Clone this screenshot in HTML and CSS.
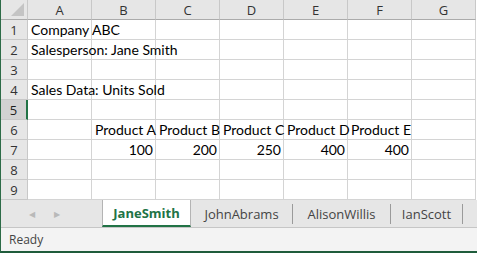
FILE: index.html
```html
<!DOCTYPE html>
<html lang="en">
<head>
    <meta charset="UTF-8">
    <title>Sales Workbook</title>
    <link rel="stylesheet" href="styles.css">
</head>
<body>
    <div class="app">
        <div class="sheet">
            <div class="corner"><span class="corner-mark"></span></div>
            <div class="col-head">A</div>
            <div class="col-head">B</div>
            <div class="col-head">C</div>
            <div class="col-head">D</div>
            <div class="col-head">E</div>
            <div class="col-head">F</div>
            <div class="col-head">G</div>

            <div class="row-head">1</div>
            <div class="cell"><span class="spill">Company ABC</span></div>
            <div class="cell"></div><div class="cell"></div><div class="cell"></div><div class="cell"></div><div class="cell"></div><div class="cell"></div>

            <div class="row-head">2</div>
            <div class="cell"><span class="spill">Salesperson: Jane Smith</span></div>
            <div class="cell"></div><div class="cell"></div><div class="cell"></div><div class="cell"></div><div class="cell"></div><div class="cell"></div>

            <div class="row-head">3</div>
            <div class="cell"></div><div class="cell"></div><div class="cell"></div><div class="cell"></div><div class="cell"></div><div class="cell"></div><div class="cell"></div>

            <div class="row-head">4</div>
            <div class="cell"><span class="spill">Sales Data: Units Sold</span></div>
            <div class="cell"></div><div class="cell"></div><div class="cell"></div><div class="cell"></div><div class="cell"></div><div class="cell"></div>

            <div class="row-head selected">5</div>
            <div class="cell"></div><div class="cell"></div><div class="cell"></div><div class="cell"></div><div class="cell"></div><div class="cell"></div><div class="cell"></div>

            <div class="row-head">6</div>
            <div class="cell"></div>
            <div class="cell">Product A</div>
            <div class="cell">Product B</div>
            <div class="cell">Product C</div>
            <div class="cell">Product D</div>
            <div class="cell">Product E</div>
            <div class="cell"></div>

            <div class="row-head">7</div>
            <div class="cell"></div>
            <div class="cell num">100</div>
            <div class="cell num">200</div>
            <div class="cell num">250</div>
            <div class="cell num">400</div>
            <div class="cell num">400</div>
            <div class="cell"></div>

            <div class="row-head">8</div>
            <div class="cell"></div><div class="cell"></div><div class="cell"></div><div class="cell"></div><div class="cell"></div><div class="cell"></div><div class="cell"></div>

            <div class="row-head">9</div>
            <div class="cell"></div><div class="cell"></div><div class="cell"></div><div class="cell"></div><div class="cell"></div><div class="cell"></div><div class="cell"></div>
        </div>

        <div class="tab-bar">
            <div class="tab-nav">
                <span class="nav-arrow">&#9664;</span>
                <span class="nav-arrow">&#9654;</span>
            </div>
            <div class="tab active">JaneSmith</div>
            <div class="tab">JohnAbrams</div>
            <div class="tab">AlisonWillis</div>
            <div class="tab">IanScott</div>
        </div>

        <div class="status-bar">Ready</div>
    </div>
</body>
</html>
```

FILE: styles.css
```css
* {
    margin: 0;
    padding: 0;
    box-sizing: border-box;
}

body {
    width: 477px;
    height: 253px;
    overflow: hidden;
    background: #ffffff;
    font-family: Lato, 'Liberation Sans', sans-serif;
}

.app {
    height: 253px;
    border-left: 1px solid #2d6b47;
    border-bottom: 2px solid #1f5c3b;
    display: flex;
    flex-direction: column;
}

/* grid of cells */
.sheet {
    display: grid;
    grid-template-columns: 27px repeat(7, 64px) 1fr;
    grid-template-rows: 20px repeat(9, 20px);
    font-size: 14px;
    color: #000;
}

.corner {
    background: #e6e6e6;
    border-right: 1px solid #c8c8c8;
    border-bottom: 1px solid #ababab;
    position: relative;
}

.corner-mark {
    position: absolute;
    right: 3px;
    bottom: 3px;
    width: 0;
    height: 0;
    border-left: 13px solid transparent;
    border-bottom: 13px solid #c4c4c4;
}

.col-head {
    background: #e6e6e6;
    border-right: 1px solid #c8c8c8;
    border-bottom: 1px solid #ababab;
    font-family: 'Open Sans', 'Noto Sans', sans-serif;
    font-size: 13px;
    color: #333;
    display: flex;
    align-items: center;
    justify-content: center;
}

.row-head {
    grid-column: 1;
    background: #e6e6e6;
    border-right: 1px solid #c8c8c8;
    border-bottom: 1px solid #c8c8c8;
    font-family: 'Open Sans', 'Noto Sans', sans-serif;
    font-size: 13px;
    color: #333;
    display: flex;
    align-items: center;
    justify-content: center;
}

.row-head.selected {
    background: #d2d2d2;
    border-right: 2px solid #217346;
    color: #1e1e1e;
}

.cell {
    border-right: 1px solid #d4d4d4;
    border-bottom: 1px solid #d4d4d4;
    padding: 0 2px 0 3px;
    display: flex;
    align-items: center;
    white-space: nowrap;
    position: relative;
}

.cell.num {
    justify-content: flex-end;
}

.spill {
    position: relative;
    z-index: 1;
}

/* sheet tabs */
.tab-bar {
    display: flex;
    align-items: stretch;
    height: 28px;
    background: #e6e6e6;
    border-bottom: 1px solid #c6c6c6;
    font-family: 'Open Sans', 'Noto Sans', sans-serif;
    font-size: 13px;
    color: #444;
}

.tab-nav {
    width: 101px;
    display: flex;
    align-items: center;
    gap: 19px;
    padding-left: 28px;
    color: #b9b9b9;
    font-size: 8px;
}

.tab {
    display: flex;
    align-items: center;
    justify-content: center;
    margin: 4px 0 3px;
    padding: 0 12px;
    border-right: 1px solid #9a9a9a;
}

.tab:nth-child(3) { width: 102px; }
.tab:nth-child(4) { width: 98px; }
.tab:nth-child(5) { width: 72px; }

.tab.active {
    width: 89px;
    margin: 0;
    background: #ffffff;
    color: #217346;
    font-weight: 700;
    border-left: 1px solid #b4b4b4;
    border-right: 1px solid #b4b4b4;
    border-bottom: 2px solid #217346;
    padding-top: 1px;
}

/* status bar */
.status-bar {
    flex: 1;
    background: #f3f3f3;
    font-family: 'Open Sans', 'Noto Sans', sans-serif;
    font-size: 12px;
    color: #444;
    padding-left: 8px;
    display: flex;
    align-items: center;
}
```
